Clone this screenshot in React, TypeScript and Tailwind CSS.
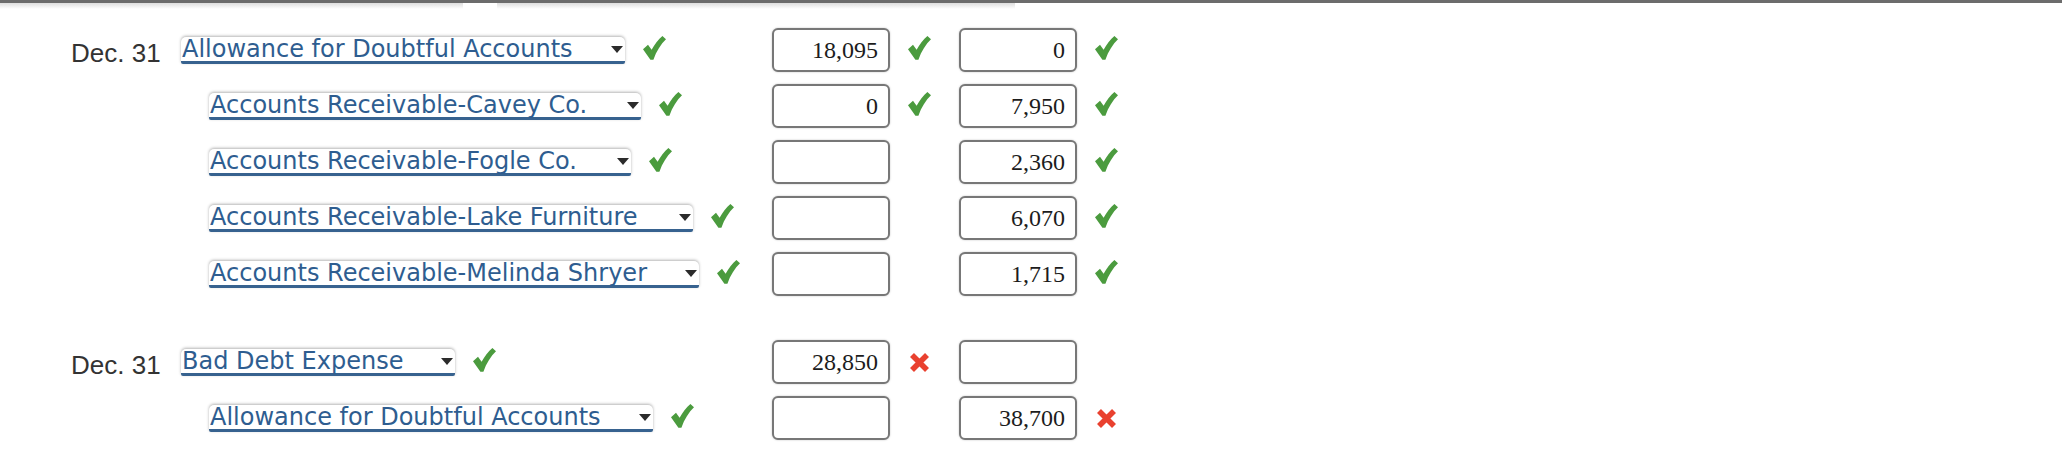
import React from "react";

type Mark = "check" | "x" | null;

type Row = {
  date?: string;
  account: string;
  width: string;
  accountMark: Mark;
  debit: string;
  debitMark: Mark;
  credit: string;
  creditMark: Mark;
  gapBefore?: boolean;
};

const rows: Row[] = [
  { date: "Dec. 31", account: "Allowance for Doubtful Accounts", width: "w-[444px]", accountMark: "check", debit: "18,095", debitMark: "check", credit: "0", creditMark: "check" },
  { account: "Accounts Receivable-Cavey Co.", width: "w-[432px]", accountMark: "check", debit: "0", debitMark: "check", credit: "7,950", creditMark: "check" },
  { account: "Accounts Receivable-Fogle Co.", width: "w-[422px]", accountMark: "check", debit: "", debitMark: null, credit: "2,360", creditMark: "check" },
  { account: "Accounts Receivable-Lake Furniture", width: "w-[484px]", accountMark: "check", debit: "", debitMark: null, credit: "6,070", creditMark: "check" },
  { account: "Accounts Receivable-Melinda Shryer", width: "w-[490px]", accountMark: "check", debit: "", debitMark: null, credit: "1,715", creditMark: "check" },
  { date: "Dec. 31", account: "Bad Debt Expense", width: "w-[274px]", accountMark: "check", debit: "28,850", debitMark: "x", credit: "", creditMark: null, gapBefore: true },
  { account: "Allowance for Doubtful Accounts", width: "w-[444px]", accountMark: "check", debit: "", debitMark: null, credit: "38,700", creditMark: "x" },
];

function CheckIcon() {
  return (
    <svg width="23" height="24" viewBox="0 0 23 24" className="-translate-y-[2px]">
      <path
        d="M0 13.2 L5 8.8 L8.6 13.8 C11.8 8.2 15.4 3.4 19.4 0 L23 3.2 C17.8 8.2 13.4 15 10.4 23.8 L7.4 23.8 Z"
        fill="#4b9b3e"
      />
    </svg>
  );
}

function XIcon() {
  return (
    <svg width="21" height="21" viewBox="0 0 21 21">
      <path d="M3 3 L18 18 M18 3 L3 18" stroke="#e9412f" strokeWidth="5.6" strokeLinecap="butt" />
    </svg>
  );
}

function MarkSlot({ mark }: { mark: Mark }) {
  return (
    <div className="ml-[18px] w-[23px] h-[26px] flex items-center justify-center shrink-0">
      {mark === "check" && <CheckIcon />}
      {mark === "x" && <XIcon />}
    </div>
  );
}

function AccountSelect({ label, width }: { label: string; width: string }) {
  return (
    <div
      className={`${width} h-[27px] shrink-0 flex items-start justify-between bg-white rounded-t-[5px] rounded-b-[2px] border-b-[3px] border-[#37628f] shadow-[0_-1px_3px_rgba(0,0,0,0.3)] pl-[1px] pr-[2px]`}
    >
      <span className="text-[24px] leading-[24px] text-[#2e5d90] font-['DejaVu_Sans',sans-serif] whitespace-nowrap">
        {label}
      </span>
      <svg width="12" height="7" viewBox="0 0 12 7" className="mt-[9px]">
        <path d="M0 0 L12 0 L6 7 Z" fill="#2b2b2b" />
      </svg>
    </div>
  );
}

function AmountBox({ value }: { value: string }) {
  return (
    <div className="w-[118px] h-[44px] shrink-0 flex items-center justify-end pr-[10px] bg-white border-2 border-[#777777] rounded-[6px] shadow-[0_0_2px_rgba(0,0,0,0.25)]">
      <span className="text-[24px] leading-[24px] text-[#1c1c1c] font-['Liberation_Serif',serif]">{value}</span>
    </div>
  );
}

export default function App() {
  return (
    <div className="w-[2062px] h-[464px] bg-white overflow-hidden">
      {/* cut-off bottom edge of the table above */}
      <div className="h-[3px] bg-[#6c6c6c]" />
      <div className="flex h-[6px]">
        <div className="w-[463px] bg-gradient-to-b from-[#dedede] to-white" />
        <div className="w-[34px]" />
        <div className="w-[518px] bg-gradient-to-b from-[#dedede] to-white" />
      </div>

      <div className="pt-[13px] flex flex-col">
        {rows.map((row, i) => (
          <div key={i} className={`h-[56px] flex items-center ${row.gapBefore ? "mt-[32px]" : ""}`}>
            <div className="w-[772px] shrink-0 flex items-center">
              {row.date ? (
                <div className="w-[181px] shrink-0 pl-[71px] pt-[5px] text-[26px] leading-[26px] text-[#333333] font-['Liberation_Sans',Arial,sans-serif] whitespace-nowrap">
                  {row.date}
                </div>
              ) : (
                <div className="w-[209px] shrink-0" />
              )}
              <AccountSelect label={row.account} width={row.width} />
              <MarkSlot mark={row.accountMark} />
            </div>
            <AmountBox value={row.debit} />
            <MarkSlot mark={row.debitMark} />
            <div className="w-[28px] shrink-0" />
            <AmountBox value={row.credit} />
            <MarkSlot mark={row.creditMark} />
          </div>
        ))}
      </div>
    </div>
  );
}
